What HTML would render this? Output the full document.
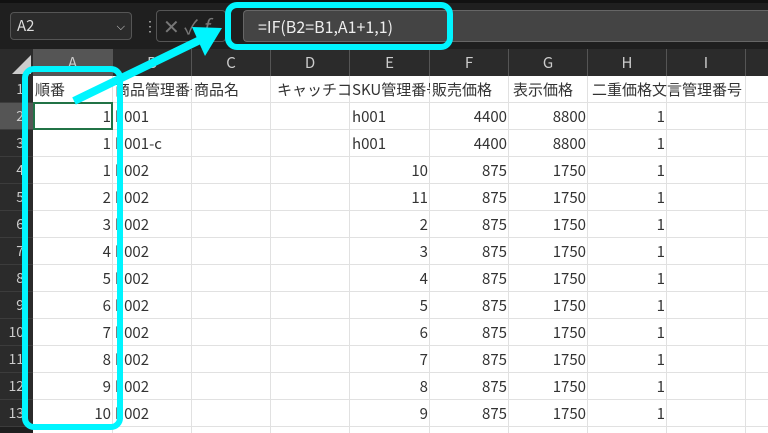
<!DOCTYPE html><html><head><meta charset="utf-8"><style>
html,body{margin:0;width:768px;height:433px;overflow:hidden}
body{background:#1f1f1f;font-family:"Noto Sans CJK JP","Liberation Sans",sans-serif;position:relative}
.a{position:absolute}
.cell{position:absolute;height:27px;line-height:27px;font-size:15px;color:#333;white-space:nowrap;overflow:hidden;box-sizing:border-box;padding:0 2px}
.ch{position:absolute;top:49px;height:27px;line-height:27px;font-size:15px;color:#ccc;text-align:center;border-right:1px solid #555;box-sizing:border-box}
.rh{position:absolute;left:0;width:33px;height:27px;line-height:27px;font-size:14px;color:#ccc;text-align:right;padding-right:9px;box-sizing:border-box;background:#2b2b2b;border-bottom:1px solid #3c3c3c}
</style></head><body>
<div class="a" style="left:0;top:0;width:768px;height:3px;background:#111"></div>
<div class="a" style="left:10px;top:12px;width:122px;height:28px;border:1px solid #555;border-radius:4px;background:#2b2b2b;color:#ddd;font-size:15px;line-height:26px;padding-left:6px;box-sizing:border-box">A2<span style="position:absolute;right:6px;top:0;font-size:11px">&#x2335;</span></div>
<div class="a" style="left:143px;top:16px;color:#bbb;font-size:14px">⋮</div>
<div class="a" style="left:156px;top:10px;width:70px;height:32px;border:1px solid #555;border-radius:4px;color:#777;font-size:20px;line-height:30px;padding-left:6px;box-sizing:border-box">✕ ✓ <i>f</i></div>
<div class="a" style="left:243px;top:10px;width:525px;height:32px;background:#444;border:1px solid #666;border-right:none;border-radius:4px 0 0 4px;color:#eee;font-size:16px;line-height:30px;padding-left:14px;box-sizing:border-box">=IF(B2=B1,A1+1,1)</div>
<div class="a" style="left:0;top:49px;width:768px;height:27px;background:#2b2b2b"></div>
<div class="a" style="left:12px;top:55px;width:0;height:0;border-left:19px solid transparent;border-bottom:19px solid #ccc"></div>
<div class="ch" style="left:33px;width:80px;background:#555">A</div>
<div class="ch" style="left:113px;width:79px">B</div>
<div class="ch" style="left:192px;width:79px">C</div>
<div class="ch" style="left:271px;width:79px">D</div>
<div class="ch" style="left:350px;width:80px">E</div>
<div class="ch" style="left:430px;width:79px">F</div>
<div class="ch" style="left:509px;width:79px">G</div>
<div class="ch" style="left:588px;width:79px">H</div>
<div class="ch" style="left:667px;width:79px">I</div>
<div class="a" style="left:33px;top:76px;width:735px;height:357px;background:#fff"></div>
<svg class="a" style="left:0;top:0" width="768" height="433">
<g stroke="#e1e1e1" stroke-width="1">
<line x1="112.5" y1="76" x2="112.5" y2="433"/><line x1="191.5" y1="76" x2="191.5" y2="433"/><line x1="270.5" y1="76" x2="270.5" y2="433"/><line x1="349.5" y1="76" x2="349.5" y2="433"/><line x1="429.5" y1="76" x2="429.5" y2="433"/><line x1="508.5" y1="76" x2="508.5" y2="433"/><line x1="587.5" y1="76" x2="587.5" y2="433"/><line x1="666.5" y1="76" x2="666.5" y2="433"/><line x1="745.5" y1="76" x2="745.5" y2="433"/>
<line x1="33" y1="102.5" x2="768" y2="102.5"/><line x1="33" y1="129.5" x2="768" y2="129.5"/><line x1="33" y1="156.5" x2="768" y2="156.5"/><line x1="33" y1="183.5" x2="768" y2="183.5"/><line x1="33" y1="210.5" x2="768" y2="210.5"/><line x1="33" y1="237.5" x2="768" y2="237.5"/><line x1="33" y1="264.5" x2="768" y2="264.5"/><line x1="33" y1="291.5" x2="768" y2="291.5"/><line x1="33" y1="318.5" x2="768" y2="318.5"/><line x1="33" y1="345.5" x2="768" y2="345.5"/><line x1="33" y1="372.5" x2="768" y2="372.5"/><line x1="33" y1="399.5" x2="768" y2="399.5"/><line x1="33" y1="426.5" x2="768" y2="426.5"/>
</g></svg>
<div class="rh" style="top:76px">1</div><div class="rh" style="top:103px;background:#555">2</div><div class="rh" style="top:130px">3</div><div class="rh" style="top:157px">4</div><div class="rh" style="top:184px">5</div><div class="rh" style="top:211px">6</div><div class="rh" style="top:238px">7</div><div class="rh" style="top:265px">8</div><div class="rh" style="top:292px">9</div><div class="rh" style="top:319px">10</div><div class="rh" style="top:346px">11</div><div class="rh" style="top:373px">12</div><div class="rh" style="top:400px">13</div>
<div class="cell" style="left:33px;top:76px">順番</div>
<div class="cell" style="left:113px;top:76px;width:79px">商品管理番号</div>
<div class="cell" style="left:192px;top:76px">商品名</div>
<div class="cell" style="left:271px;top:76px;width:79px;padding-left:6px">キャッチコピー</div>
<div class="cell" style="left:350px;top:76px;width:80px">SKU管理番号</div>
<div class="cell" style="left:430px;top:76px">販売価格</div>
<div class="cell" style="left:509px;top:76px;padding-left:4px">表示価格</div>
<div class="cell" style="left:588px;top:76px;padding-left:4px">二重価格文言管理番号</div>
<div class="a" style="left:33px;top:102px;width:80px;height:28px;border:2px solid #217346;box-sizing:border-box"></div>
<div id="rows"></div>
<script>
var d=[[1,'h001','h001','',4400,8800],[1,'h001-c','h001','',4400,8800],[1,'h002','',10,875,1750],[2,'h002','',11,875,1750],[3,'h002','',2,875,1750],[4,'h002','',3,875,1750],[5,'h002','',4,875,1750],[6,'h002','',5,875,1750],[7,'h002','',6,875,1750],[8,'h002','',7,875,1750],[9,'h002','',8,875,1750],[10,'h002','',9,875,1750]];
var h='';d.forEach(function(r,i){var t=103+27*i;
h+='<div class="cell" style="left:33px;width:80px;text-align:right;top:'+t+'px">'+r[0]+'</div>';
h+='<div class="cell" style="left:113px;top:'+t+'px">'+r[1]+'</div>';
if(r[2])h+='<div class="cell" style="left:350px;top:'+t+'px">'+r[2]+'</div>';
if(r[3]!=='')h+='<div class="cell" style="left:350px;width:80px;text-align:right;top:'+t+'px">'+r[3]+'</div>';
h+='<div class="cell" style="left:430px;width:79px;text-align:right;top:'+t+'px">'+r[4]+'</div>';
h+='<div class="cell" style="left:509px;width:79px;text-align:right;top:'+t+'px">'+r[5]+'</div>';
h+='<div class="cell" style="left:588px;width:79px;text-align:right;top:'+t+'px">1</div>';});
document.getElementById('rows').innerHTML=h;
</script>
<svg class="a" style="left:0;top:0" width="768" height="433">
<rect x="25" y="69" width="95" height="358" rx="9" fill="none" stroke="#00f5ff" stroke-width="6"/>
<rect x="228" y="5" width="222" height="42" rx="9" fill="none" stroke="#00f5ff" stroke-width="6"/>
<line x1="74" y1="101" x2="200" y2="40" stroke="#00f5ff" stroke-width="8"/>
<polygon points="222,28 192,27 205,56" fill="#00f5ff"/>
</svg>
</body></html>
